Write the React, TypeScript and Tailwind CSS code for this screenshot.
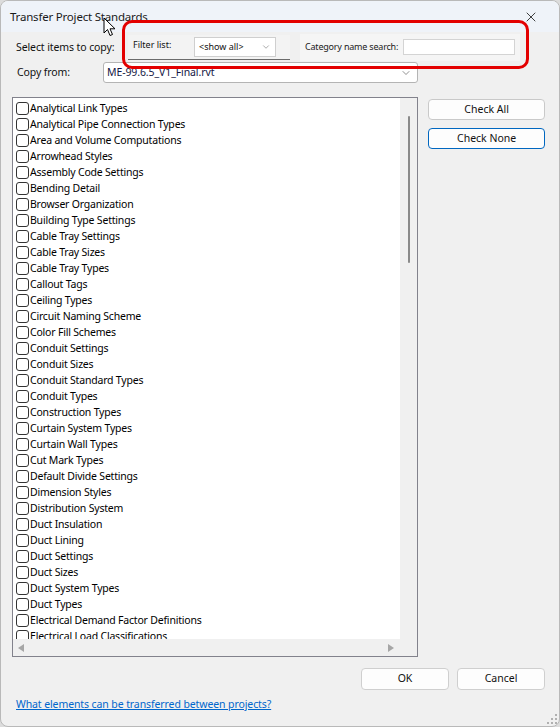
import { ChevronDown, X } from "lucide-react"

const items = [
  "Analytical Link Types",
  "Analytical Pipe Connection Types",
  "Area and Volume Computations",
  "Arrowhead Styles",
  "Assembly Code Settings",
  "Bending Detail",
  "Browser Organization",
  "Building Type Settings",
  "Cable Tray Settings",
  "Cable Tray Sizes",
  "Cable Tray Types",
  "Callout Tags",
  "Ceiling Types",
  "Circuit Naming Scheme",
  "Color Fill Schemes",
  "Conduit Settings",
  "Conduit Sizes",
  "Conduit Standard Types",
  "Conduit Types",
  "Construction Types",
  "Curtain System Types",
  "Curtain Wall Types",
  "Cut Mark Types",
  "Default Divide Settings",
  "Dimension Styles",
  "Distribution System",
  "Duct Insulation",
  "Duct Lining",
  "Duct Settings",
  "Duct Sizes",
  "Duct System Types",
  "Duct Types",
  "Electrical Demand Factor Definitions",
  "Electrical Load Classifications",
]

function Cursor() {
  return (
    <svg className="absolute left-[103px] top-[17px]" width="14" height="21" viewBox="0 0 14 21">
      <path
        d="M1 1 L1 16 L4.5 12.5 L7 18.5 L9.5 17.5 L7 11.8 L12 11.8 Z"
        fill="#fff"
        stroke="#000"
        strokeWidth="1"
        strokeLinejoin="round"
      />
    </svg>
  )
}

export default function App() {
  return (
    <div className="w-[560px] h-[727px] bg-[#dcdcdc] relative" style={{ fontFamily: '"Noto Sans", "Open Sans", sans-serif' }}>
      <div className="w-full h-full flex flex-col bg-[#f0f0f0] border border-[#b9b9b9] rounded-[8px] overflow-hidden">
        {/* title bar */}
        <div className="h-[31px] shrink-0 bg-[#eff3f9] flex items-center justify-between pl-[9px] pr-[20px]">
          <span className="text-[11.5px] tracking-[-0.2px] text-[#1a1a1a] mt-[1px]">Transfer Project Standards</span>
          <X className="w-[16px] h-[16px] text-[#222]" strokeWidth={1.3} />
        </div>

        <div className="flex flex-col pl-[11px] pr-[14px]">
          {/* row 1 */}
          <div className="flex items-center h-[28px] mt-[1px]">
            <span className="w-[116px] pl-[4px] text-[10.5px] tracking-[-0.1px] text-[#111] mt-[2px] whitespace-nowrap">Select items to copy:</span>
            <div className="w-[162px] h-[25px] bg-[#f3f3f3] border-b border-[#6b6b6b] flex items-start pl-[5px] pt-[2px] mt-[1px]">
              <span className="text-[9px] text-[#111] w-[61px] mt-[1px] whitespace-nowrap">Filter list:</span>
              <div className="w-[82px] h-[20px] bg-white border border-[#cfcfcf] flex items-center justify-between pl-[4px] pr-[4px]">
                <span className="text-[9px] text-[#111] whitespace-nowrap">&lt;show all&gt;</span>
                <ChevronDown className="w-[10px] h-[10px] text-[#666]" strokeWidth={1.3} />
              </div>
            </div>
            <div className="ml-[10px] w-[220px] h-[27px] bg-[#f5f5f5] flex items-center pl-[5px]">
              <span className="text-[9px] tracking-[-0.2px] text-[#222] w-[98px] whitespace-nowrap">Category name search:</span>
              <div className="w-[112px] h-[16px] bg-white border border-[#d4d4d4]" />
            </div>
          </div>

          {/* row 2 */}
          <div className="flex items-center h-[21px] mt-[1px]">
            <span className="w-[91px] pl-[5px] text-[10.5px] tracking-[-0.1px] text-[#111]">Copy from:</span>
            <div className="w-[315px] h-[21px] bg-white border border-[#b4b4b4] rounded-[3px] flex items-center justify-between pl-[3px] pr-[5px]">
              <span className="text-[10.5px] tracking-[-0.1px] text-[#141845]">ME-99.6.5_V1_Final.rvt</span>
              <ChevronDown className="w-[12px] h-[12px] text-[#555]" strokeWidth={1.3} />
            </div>
          </div>

          {/* list + side buttons */}
          <div className="flex mt-[14px]">
            <div className="w-[407px] h-[560px] border border-[#82828c] flex flex-col bg-[#f0f0f0]">
              <div className="flex flex-1 min-h-0">
                <div className="flex-1 bg-white overflow-hidden pt-[2px]">
                  {items.map((name) => (
                    <div key={name} className="h-[16px] flex items-center pl-[3px]">
                      <span className="w-[13px] h-[13px] border border-[#333] rounded-[3px] bg-white shrink-0" />
                      <span className="ml-[1px] text-[10.5px] tracking-[-0.2px] text-black whitespace-nowrap leading-none">{name}</span>
                    </div>
                  ))}
                </div>
                <div className="w-[17px] flex justify-center pt-[18px]">
                  <div className="w-[2px] h-[147px] bg-[#8a8a8a] rounded-full" />
                </div>
              </div>
              <div className="h-[17px] flex items-center shrink-0">
                <div className="flex-1 flex items-center justify-between pl-[5px] pr-[6px]">
                  <svg width="6" height="8" viewBox="0 0 6 8"><path d="M6 0 L0 4 L6 8 Z" fill="#a6a6a6" /></svg>
                  <svg width="6" height="8" viewBox="0 0 6 8"><path d="M0 0 L6 4 L0 8 Z" fill="#a6a6a6" /></svg>
                </div>
                <div className="w-[17px]" />
              </div>
            </div>

            <div className="ml-[10px] flex flex-col w-[117px]">
              <div className="h-[21px] mt-[2px] bg-[#fdfdfd] border border-[#c9c9c9] rounded-[4px] flex items-center justify-center text-[10.5px] text-[#111]">
                Check All
              </div>
              <div className="h-[21px] mt-[8px] bg-[#fdfdfd] border border-[#0067c0] rounded-[4px] flex items-center justify-center text-[10.5px] text-[#111]">
                Check None
              </div>
            </div>
          </div>

          {/* bottom buttons */}
          <div className="flex justify-end mt-[11px]">
            <div className="w-[88px] h-[22px] bg-[#fdfdfd] border border-[#cfcfcf] rounded-[4px] flex items-center justify-center text-[10.5px] text-[#111]">
              OK
            </div>
            <div className="w-[88px] h-[22px] ml-[8px] bg-[#fdfdfd] border border-[#cfcfcf] rounded-[4px] flex items-center justify-center text-[10.5px] text-[#111]">
              Cancel
            </div>
          </div>

          <div className="mt-[6px] pl-[4px] h-[16px] flex items-center">
            <span className="text-[10.5px] tracking-[-0.1px] leading-none text-[#0066cc] underline">What elements can be transferred between projects?</span>
          </div>
        </div>
      </div>

      {/* resize grip */}
      <svg className="absolute right-[3px] bottom-[3px]" width="10" height="10" viewBox="0 0 10 10">
        <g fill="#b0b0b0">
          <rect x="8" y="0" width="2" height="2" />
          <rect x="4" y="4" width="2" height="2" />
          <rect x="8" y="4" width="2" height="2" />
          <rect x="0" y="8" width="2" height="2" />
          <rect x="4" y="8" width="2" height="2" />
          <rect x="8" y="8" width="2" height="2" />
        </g>
      </svg>

      {/* red annotation */}
      <div className="absolute left-[122px] top-[20px] w-[407px] h-[49px] border-[3px] border-[#e30000] rounded-[10px]" />

      <Cursor />
    </div>
  )
}
